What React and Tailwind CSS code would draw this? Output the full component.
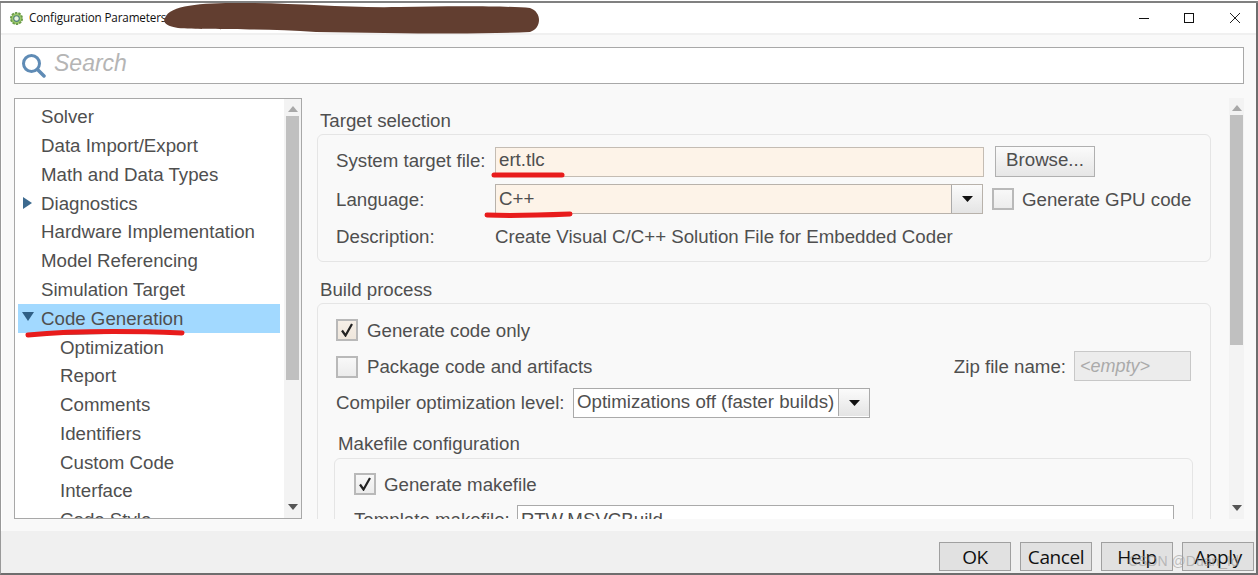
import React from "react";

const font = "font-['Liberation_Sans',Arial,sans-serif]";
const topItems = ["Solver", "Data Import/Export", "Math and Data Types", "Diagnostics", "Hardware Implementation", "Model Referencing", "Simulation Target"];
const subItems = ["Optimization", "Report", "Comments", "Identifiers", "Custom Code", "Interface", "Code Style"];

function Check({ checked, tint }) {
  return (
    <span className={`w-[22px] h-[22px] shrink-0 border-2 border-[#b9b9b9] flex items-center justify-center ${tint ? "bg-gradient-to-b from-[#f6efe7] to-[#efe7dd]" : "bg-gradient-to-b from-[#f8f8f8] to-[#ececec]"}`}>
      {checked && (
        <svg width="14" height="14" viewBox="0 0 14 14">
          <path d="M2 7.5 L5.5 12.5 L12 1" fill="none" stroke="#222" strokeWidth="2.2" />
        </svg>
      )}
    </span>
  );
}

function Arrow({ w }) {
  return (
    <span className={`${w} h-full shrink-0 border-l border-[#aaa] bg-gradient-to-b from-[#fbfbfb] to-[#e4e4e4] flex items-center justify-center`}>
      <svg width="11" height="6" viewBox="0 0 11 6"><path d="M0 0H11L5.5 6Z" fill="#111" /></svg>
    </span>
  );
}

function ScrollBar({ w, thumbH, thumbW }) {
  return (
    <div className={`${w} h-full shrink-0 bg-[#f3f3f3] flex flex-col items-center relative`}>
      <svg width="10" height="6" viewBox="0 0 10 6" className="mt-[7px]"><path d="M0 6H10L5 0Z" fill="#a8a8a8" /></svg>
      <div className={`${thumbW} ${thumbH} bg-[#c0c0c0] mt-[4px]`} />
      <svg width="10" height="6" viewBox="0 0 10 6" className="absolute bottom-[8px]"><path d="M0 0H10L5 6Z" fill="#555" /></svg>
    </div>
  );
}

function FootBtn({ children }) {
  return (
    <button className="w-[72px] h-[29px] border border-[#a0a0a0] bg-[#e1e1e1] text-[#111] text-[19px] leading-none font-['Open_Sans',sans-serif] tracking-[-0.4px] flex items-center justify-center pt-[2px]">
      {children}
    </button>
  );
}

export default function App() {
  return (
    <div className={`w-[1258px] h-[575px] relative overflow-hidden bg-white ${font} text-[18.7px] text-[#4f4f4f] flex flex-col`}>
      <div className="h-[3px] shrink-0 bg-white border-b-2 border-[#808080] mt-0" />
      <div className="flex-1 min-h-0 flex flex-col border-r-2 border-b-2 border-[#6e6e6e] border-l border-l-[#999]">
        {/* title bar */}
        <div className="h-[30px] shrink-0 bg-white flex items-center pl-[8px]">
          <svg width="15" height="15" viewBox="0 0 16 16" className="shrink-0">
            <circle cx="8" cy="8" r="6" fill="#9cc96a" stroke="#6a9a4a" strokeWidth="2" strokeDasharray="2.5 1.2" />
            <circle cx="8" cy="8" r="3" fill="#eaf3de" stroke="#4f7f7a" strokeWidth="1.2" />
          </svg>
          <span className="ml-[5px] text-[11.7px] text-[#111] font-['Open_Sans',sans-serif] tracking-[-0.15px]">Configuration Parameters</span>
          <div className="ml-auto flex items-center text-black">
            <svg width="12" height="12" viewBox="0 0 12 12" className="mr-[33px]"><path d="M1 6.5H11" stroke="#111" strokeWidth="1" /></svg>
            <svg width="12" height="12" viewBox="0 0 12 12" className="mr-[34px]"><rect x="1.5" y="1.5" width="9" height="9" fill="none" stroke="#111" strokeWidth="1" /></svg>
            <svg width="12" height="12" viewBox="0 0 12 12" className="mr-[15px]"><path d="M1 1L11 11M11 1L1 11" stroke="#222" strokeWidth="1" /></svg>
          </div>
        </div>
        <div className="h-[2px] shrink-0 bg-[#f0f0f0]" />

        {/* main pane */}
        <div className="h-[496px] shrink-0 bg-[#f9f9f9] pl-[12px] pr-[12px] pt-[12px] ml-[1px]">
          <div className="h-[37px] bg-white border border-[#a8a8a8] flex items-center pl-[6px]">
            <svg width="25" height="25" viewBox="0 0 25 25" className="shrink-0">
              <circle cx="10.5" cy="10.5" r="8" fill="none" stroke="#5f8bb5" strokeWidth="3" />
              <path d="M16.5 16.5L23 23" stroke="#5f8bb5" strokeWidth="3.5" strokeLinecap="round" />
            </svg>
            <span className="ml-[8px] mb-[4px] italic text-[#b5b5b5] text-[23px]">Search</span>
          </div>

          <div className="flex mt-[14px] h-[421px]">
            {/* tree */}
            <div className="w-[288px] h-full shrink-0 bg-white border border-[#a8a8a8] flex overflow-hidden">
              <div className="flex-1 min-w-0 pt-[4px] pl-[3px] pr-[4px] overflow-hidden">
                {topItems.map((t) => (
                  <div key={t} className="h-[28.75px] flex items-center pl-[23px] relative whitespace-nowrap">
                    {t === "Diagnostics" && (
                      <svg width="9" height="12" viewBox="0 0 9 12" className="absolute left-[5px] top-[8px]"><path d="M0 0L9 6L0 12Z" fill="#3d6a8f" /></svg>
                    )}
                    {t}
                  </div>
                ))}
                <div className="h-[29px] bg-[#a2d9ff] flex items-center pl-[23px] relative whitespace-nowrap">
                  <svg width="12" height="9" viewBox="0 0 12 9" className="absolute left-[4px] top-[8px]"><path d="M0 0H12L6 9Z" fill="#2f5f85" /></svg>
                  Code Generation
                </div>
                {subItems.map((t) => (
                  <div key={t} className="h-[28.75px] flex items-center pl-[42px] whitespace-nowrap">{t}</div>
                ))}
              </div>
              <ScrollBar w="w-[17px]" thumbW="w-[13px]" thumbH="h-[264px]" />
            </div>

            {/* right panel */}
            <div className="flex-1 min-w-0 h-full flex overflow-hidden pl-[15px]">
              <div className="flex-1 min-w-0 overflow-hidden pt-[12px]">
                <div className="leading-[22px] pl-[3px]">Target selection</div>
                <div className="h-[128px] w-[894px] mt-[2px] border border-[#e5e5e5] rounded-[6px] pl-[18px] pt-[11px]">
                  <div className="flex items-center h-[31px]">
                    <span className="w-[159px] shrink-0">System target file:</span>
                    <div className="w-[489px] h-[30px] bg-[#fdf3e8] border border-[#c4bcb3] flex items-center pl-[3px] pb-[2px]">ert.tlc</div>
                    <button className="w-[100px] h-[31px] ml-[11px] border border-[#b0b0b0] bg-gradient-to-b from-[#fbfbfb] to-[#e6e6e6] flex items-center justify-center pb-[2px]">Browse...</button>
                  </div>
                  <div className="flex items-center h-[30px] mt-[7px]">
                    <span className="w-[159px] shrink-0 mt-[2px]">Language:</span>
                    <div className="w-[488px] h-[30px] bg-[#fdf3e8] border border-[#b8b2ab] flex items-center pl-[3px]">
                      <span className="flex-1">C++</span>
                      <Arrow w="w-[31px]" />
                    </div>
                    <span className="ml-[9px]"><Check /></span>
                    <span className="ml-[8px] mt-[2px] whitespace-nowrap">Generate GPU code</span>
                  </div>
                  <div className="flex items-center h-[22px] mt-[12px]">
                    <span className="w-[159px] shrink-0">Description:</span>
                    <span className="whitespace-nowrap">Create Visual C/C++ Solution File for Embedded Coder</span>
                  </div>
                </div>

                <div className="leading-[22px] pl-[3px] mt-[17px]">Build process</div>
                <div className="w-[894px] mt-[2px] border border-[#e5e5e5] rounded-[6px] pl-[18px] pt-[15px] pb-[40px]">
                  <div className="flex items-center h-[22px] gap-[9px]">
                    <Check checked tint />
                    <span className="mt-[2px]">Generate code only</span>
                  </div>
                  <div className="flex items-center h-[30px] mt-[10px] gap-[9px]">
                    <span className="mt-[2px]"><Check /></span>
                    <span className="mt-[2px]">Package code and artifacts</span>
                    <span className="ml-auto mt-[2px] whitespace-nowrap">Zip file name:</span>
                    <div className="w-[117px] h-[30px] ml-[-1px] mr-[19px] bg-[#ececec] border border-[#c8c8c8] flex items-center pl-[5px] italic text-[18px] text-[#aaa]">&lt;empty&gt;</div>
                  </div>
                  <div className="flex items-center h-[30px] mt-[7px]">
                    <span className="w-[237px] shrink-0 whitespace-nowrap">Compiler optimization level:</span>
                    <div className="w-[297px] h-[30px] bg-white border border-[#aaa] flex items-center pl-[3px] pb-[1px]">
                      <span className="flex-1 whitespace-nowrap">Optimizations off (faster builds)</span>
                      <Arrow w="w-[31px]" />
                    </div>
                  </div>
                  <div className="leading-[22px] pl-[2px] mt-[15px]">Makefile configuration</div>
                  <div className="w-[859px] ml-[-2px] mt-[3px] border border-[#e5e5e5] rounded-[6px] pl-[19px] pt-[14px]">
                    <div className="flex items-center h-[22px] gap-[8px]">
                      <Check checked />
                      <span className="mt-[2px]">Generate makefile</span>
                    </div>
                    <div className="flex items-center h-[30px] mt-[10px]">
                      <span className="w-[163px] shrink-0 whitespace-nowrap">Template makefile:</span>
                      <div className="w-[657px] h-[30px] bg-white border border-[#aaa] flex items-center pl-[3px]">RTW.MSVCBuild</div>
                    </div>
                  </div>
                </div>
              </div>
              <ScrollBar w="w-[15px]" thumbW="w-[13px]" thumbH="h-[230px]" />
            </div>
          </div>
        </div>

        {/* footer */}
        <div className="flex-1 min-h-0 bg-[#f0f0f0] flex justify-end items-start gap-[9px] pr-[2px] pt-[11px]">
          <FootBtn>OK</FootBtn>
          <FootBtn>Cancel</FootBtn>
          <FootBtn>Help</FootBtn>
          <FootBtn>Apply</FootBtn>
        </div>
      </div>

      {/* overlays: hand annotations */}
      <svg width="1258" height="575" className="absolute left-0 top-0 pointer-events-none">
        <path d="M165 18 C170 5 200 3 240 3 C300 3 340 8 400 7 C450 6 510 6 530 8 C542 12 542 28 530 32 C470 35 390 33 316 32 C260 28 200 30 178 28 C165 26 163 22 165 18Z" fill="#623e30" />
        <path d="M494 175H562" stroke="#e81c1c" strokeWidth="5" strokeLinecap="round" />
        <path d="M487 215C510 216 545 215 570 214" stroke="#e81c1c" strokeWidth="5" strokeLinecap="round" />
        <path d="M28 335C70 331 130 331 182 333" stroke="#e81c1c" strokeWidth="5" strokeLinecap="round" />
      </svg>
      <span className="absolute left-[1128px] top-[551px] text-[14px] text-[#9a9a9a]/60 whitespace-nowrap pointer-events-none">CSDN @Duan_Id</span>
    </div>
  );
}
